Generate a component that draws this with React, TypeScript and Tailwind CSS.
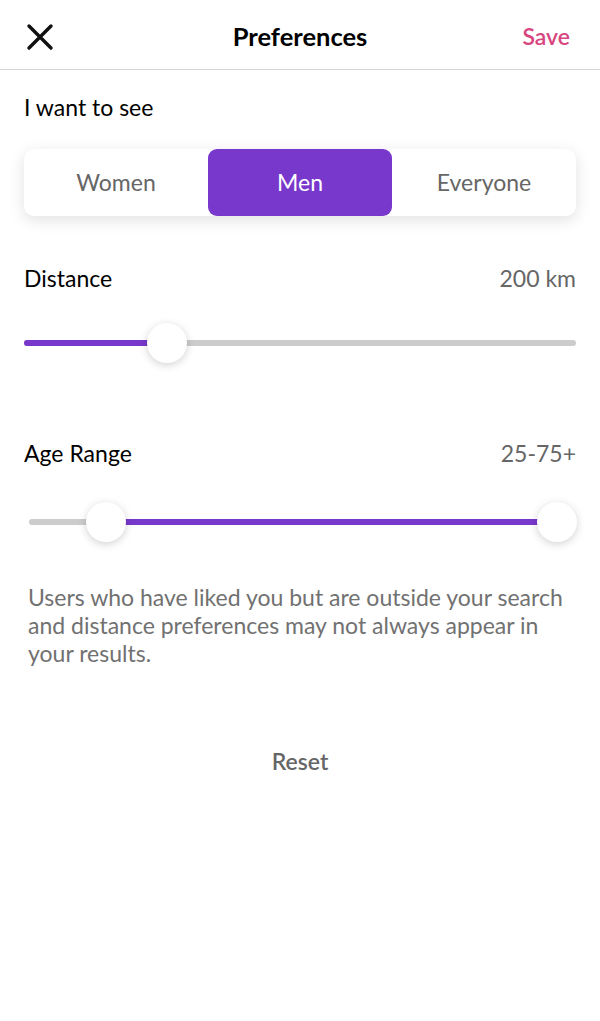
import { useState } from "react";

type Who = "Women" | "Men" | "Everyone";

const font = { fontFamily: "Lato, 'Open Sans', sans-serif" };

function Thumb({ left }: { left: number }) {
  return (
    <div
      className="absolute top-1/2 w-[40px] h-[40px] -ml-[20px] -mt-[20px] rounded-full bg-white shadow-[0_2px_8px_rgba(0,0,0,0.18)]"
      style={{ left }}
    />
  );
}

export default function App() {
  const [who, setWho] = useState<Who>("Men");

  return (
    <div className="w-[600px] h-[1021px] bg-white text-black" style={font}>
      {/* header */}
      <div className="h-[70px] pt-[4px] flex items-center justify-between px-[24px] border-b border-[#d6d6d6]">
        <button className="w-[60px] h-[40px] flex items-center justify-start">
          <svg width="28" height="28" viewBox="0 0 28 28" className="ml-[2px]">
            <path d="M3 3 L25 25 M25 3 L3 25" stroke="#111" strokeWidth="3.4" strokeLinecap="round" />
          </svg>
        </button>
        <div className="text-[25.5px] font-bold">Preferences</div>
        <button className="w-[60px] text-right text-[23px] font-semibold text-[#d8457f] pr-[6px]">Save</button>
      </div>

      <div className="px-[24px]">
        <div className="pt-[22px] text-[23px] leading-[30px]">I want to see</div>

        {/* segmented */}
        <div className="mt-[27px] h-[67px] rounded-[10px] bg-white shadow-[0_4px_16px_rgba(0,0,0,0.12)] flex">
          {(["Women", "Men", "Everyone"] as Who[]).map((w) => (
            <button
              key={w}
              onClick={() => setWho(w)}
              className={
                "flex-1 flex items-center justify-center text-[23px] rounded-[9px] " +
                (who === w ? "bg-[#7838cc] text-white" : "text-[#666]")
              }
            >
              {w}
            </button>
          ))}
        </div>

        {/* distance */}
        <div className="mt-[47px] flex justify-between items-center text-[23px] leading-[30px]">
          <span>Distance</span>
          <span className="text-[#666]">200 km</span>
        </div>
        <div className="relative h-[40px] mt-[30px]">
          <div className="absolute left-0 right-0 top-1/2 -mt-[3px] h-[6px] rounded-full bg-[#cccccc]" />
          <div className="absolute left-0 w-[143px] top-1/2 -mt-[3px] h-[6px] rounded-full bg-[#7838cc]" />
          <Thumb left={143} />
        </div>

        {/* age */}
        <div className="mt-[75px] flex justify-between items-center text-[23px] leading-[30px]">
          <span>Age Range</span>
          <span className="text-[#666]">25-75+</span>
        </div>
        <div className="relative h-[40px] mt-[34px]">
          <div className="absolute left-[5px] w-[80px] top-1/2 -mt-[3px] h-[6px] rounded-full bg-[#cccccc]" />
          <div className="absolute left-[82px] right-[19px] top-1/2 -mt-[3px] h-[6px] bg-[#7838cc]" />
          <Thumb left={82} />
          <Thumb left={533} />
        </div>

        <p className="mt-[41px] px-[4px] text-[23px] leading-[28px] text-[#717171]">
          Users who have liked you but are outside your search and distance preferences may not always appear in your results.
        </p>

        <div className="mt-[77px] text-center">
          <button className="text-[23px] font-semibold text-[#666]">Reset</button>
        </div>
      </div>
    </div>
  );
}
